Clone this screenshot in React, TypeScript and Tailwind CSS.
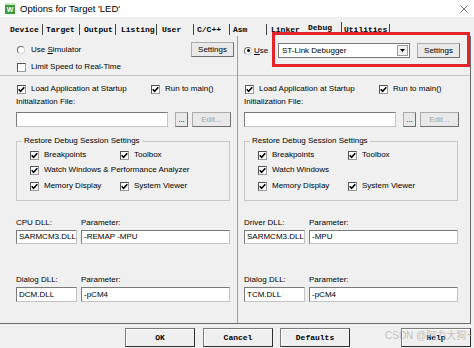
import React from 'react';

type Kids = { children?: React.ReactNode; className?: string };

const Check = ({ on = true }: { on?: boolean }) => (
  <span className="w-[9px] h-[9px] shrink-0 flex items-center justify-center bg-white border border-[#9a9a9a] border-t-[#555] border-l-[#555]">
    {on && (
      <svg width="7" height="7" viewBox="0 0 7 7">
        <path d="M0.7 3.3 2.6 5.3 6.3 1.2" fill="none" stroke="#000" strokeWidth="1.6" />
      </svg>
    )}
  </span>
);

const Radio = ({ on = false }: { on?: boolean }) => (
  <span className="w-[8px] h-[8px] shrink-0 rounded-full flex items-center justify-center bg-white border border-[#d4d4d4] border-t-[#6a6a6a] border-l-[#6a6a6a]">
    {on && <span className="w-[3px] h-[3px] rounded-full bg-black" />}
  </span>
);

const Opt = ({ label, on = true, className = '' }: { label: React.ReactNode; on?: boolean; className?: string }) => (
  <div className={`h-[10px] flex items-center gap-[5px] ${className}`}>
    <Check on={on} />
    <span className="whitespace-nowrap">{label}</span>
  </div>
);

const Btn = ({ children, className = '' }: Kids) => (
  <div className={`h-[15px] shrink-0 flex items-center justify-center bg-[#e9e9e9] border border-[#acacac] border-r-[#707070] border-b-[#707070] ${className}`}>
    {children}
  </div>
);

const Field = ({ children, className = '' }: Kids) => (
  <div className={`shrink-0 flex items-center pl-[2px] overflow-hidden bg-white border border-[#c4c4c4] border-t-[#7a7a7a] border-l-[#7a7a7a] whitespace-nowrap ${className}`}>
    {children}
  </div>
);

const BigBtn = ({ children, className = '' }: Kids) => (
  <div className={`h-[19px] w-[70px] shrink-0 flex items-center justify-center bg-[#efefef] border border-[#7b7b7b] border-r-[#2e2e2e] border-b-[#2e2e2e] shadow-[inset_1px_1px_0_#fff] font-['Liberation_Mono',monospace] font-bold text-[8px] ${className}`}>
    {children}
  </div>
);

type LowerProps = {
  watch: string;
  dllLabel: string;
  dll1: string;
  param1: string;
  dll2: string;
  param2: string;
};

const Lower = ({ watch, dllLabel, dll1, param1, dll2, param2 }: LowerProps) => (
  <div className="flex flex-col">
    <div className="mt-[8px] flex items-center">
      <Opt label="Load Application at Startup" className="w-[134px] ml-[1px]" />
      <Opt label="Run to main()" />
    </div>
    <div className="mt-[3px] h-[10px] leading-[10px]">Initialization File:</div>
    <div className="mt-[5px] flex items-center">
      <Field className="w-[152px] h-[15px]" />
      <Btn className="w-[13px] ml-[7px] leading-none">...</Btn>
      <Btn className="w-[39px] ml-[4px] text-[#a3a3a3]">Edit...</Btn>
    </div>
    <fieldset className="mt-[9px] h-[65px] w-[214px] border border-[#c8c8c8]">
      <legend className="ml-[5px] px-[2px] leading-[10px]">Restore Debug Session Settings</legend>
      <div className="pl-[13px] pt-[4px] flex flex-col gap-[5px]">
        <div className="flex">
          <Opt label="Breakpoints" className="w-[90px]" />
          <Opt label="Toolbox" />
        </div>
        <Opt label={watch} />
        <div className="flex mt-[1px]">
          <Opt label="Memory Display" className="w-[90px]" />
          <Opt label="System Viewer" />
        </div>
      </div>
    </fieldset>
    <div className="mt-[17px] h-[10px] leading-[10px] flex">
      <span className="w-[65px]">{dllLabel}</span>
      <span>Parameter:</span>
    </div>
    <div className="mt-[2px] flex gap-[4px]">
      <Field className="w-[61px] h-[14px]">{dll1}</Field>
      <Field className="w-[149px] h-[14px]">{param1}</Field>
    </div>
    <div className="mt-[31px] h-[10px] leading-[10px] flex">
      <span className="w-[65px]">Dialog DLL:</span>
      <span>Parameter:</span>
    </div>
    <div className="mt-[2px] flex gap-[4px]">
      <Field className="w-[61px] h-[15px]">{dll2}</Field>
      <Field className="w-[149px] h-[15px]">{param2}</Field>
    </div>
  </div>
);

const tabs = [
  { label: 'Device', cls: 'w-[43px] pl-[10px] border-r' },
  { label: 'Target', cls: 'w-[37px] pl-[3px] border-r' },
  { label: 'Output', cls: 'w-[36px] pl-[4px] border-r' },
  { label: 'Listing', cls: 'w-[41px] pl-[5px] border-r' },
  { label: 'User', cls: 'w-[37px] pl-[5px] border-r' },
  { label: 'C/C++', cls: 'w-[36px] pl-[3px] border-r' },
  { label: 'Asm', cls: 'w-[37px] pl-[3px] border-r' },
  { label: 'Linker', cls: 'w-[39px] pl-[4px]' },
  { label: 'Debug', cls: 'w-[36px] pl-[2px] border-r mb-[2px]' },
  { label: 'Utilities', cls: 'w-[48px] pl-[2px] border-r' },
];

const App: React.FC = () => {
  return (
    <div className="relative w-[474px] h-[348px] overflow-hidden bg-[#f0f0f0] text-black text-[8px] font-['Liberation_Sans',Arial,sans-serif] flex flex-col">
      {/* Title bar */}
      <div className="h-[17px] shrink-0 bg-white flex items-center">
        <div className="ml-[5px] w-[10px] h-[11px] bg-[#3c9a3c] border-t-2 border-[#cfe8c0] flex items-center justify-center text-white font-bold text-[7px] leading-none">
          W
        </div>
        <span className="ml-[5px] text-[9.5px] leading-none">Options for Target 'LED'</span>
        <svg className="ml-auto mr-[6px]" width="8" height="8" viewBox="0 0 8 8">
          <path d="M0.5 0.5 7.5 7.5 M7.5 0.5 0.5 7.5" stroke="#666" strokeWidth="0.9" />
        </svg>
      </div>

      {/* Tab strip */}
      <div className="h-[19px] shrink-0 flex items-end pb-[1px] font-['Liberation_Mono',monospace] font-bold text-[8px]">
        {tabs.map((t) => (
          <div key={t.label} className={`h-[11px] flex items-center border-[#444] leading-none ${t.cls}`}>
            {t.label}
          </div>
        ))}
      </div>

      {/* Tab page */}
      <div className="h-[288px] w-[471px] shrink-0 flex border-r border-b border-[#6a6a6a]">
        {/* left half */}
        <div className="w-[238px] border-r border-[#a0a0a0] flex flex-col">
          <div className="h-[40px] border-b border-[#c8c8c8] pl-[17px] pr-[3px] pt-[6px] flex flex-col">
            <div className="h-[15px] flex items-center">
              <Radio />
              <span className="ml-[6px]">
                Use <span className="underline">S</span>imulator
              </span>
              <Btn className="w-[43px] ml-auto">Settings</Btn>
            </div>
            <Opt label="Limit Speed to Real-Time" on={false} className="mt-[5px]" />
          </div>
          <div className="pl-[16px]">
            <Lower
              watch="Watch Windows & Performance Analyzer"
              dllLabel="CPU DLL:"
              dll1="SARMCM3.DLL"
              param1="-REMAP -MPU"
              dll2="DCM.DLL"
              param2="-pCM4"
            />
          </div>
        </div>

        {/* right half */}
        <div className="flex-1 flex flex-col">
          <div className="h-[40px] border-b border-[#c8c8c8] pl-[6px] pt-[7px]">
            <div className="h-[15px] flex items-center">
              <div className="w-[34px] flex items-center gap-[2px]">
                <Radio on />
                <span>
                  <span className="underline">U</span>se
                </span>
              </div>
              <div className="w-[132px] h-[15px] bg-white border border-[#7a7a7a] flex items-center pl-[3px] pr-[1px]">
                <span className="flex-1 whitespace-nowrap">ST-Link Debugger</span>
                <span className="w-[11px] h-[11px] bg-[#f0f0f0] border border-[#9a9a9a] flex items-center justify-center">
                  <svg width="5" height="3" viewBox="0 0 5 3">
                    <path d="M0 0h5L2.5 3z" fill="#000" />
                  </svg>
                </span>
              </div>
              <Btn className="w-[43px] ml-[7px]">Settings</Btn>
            </div>
          </div>
          <div className="pl-[6px]">
            <Lower
              watch="Watch Windows"
              dllLabel="Driver DLL:"
              dll1="SARMCM3.DLL"
              param1="-MPU"
              dll2="TCM.DLL"
              param2="-pCM4"
            />
          </div>
        </div>
      </div>

      {/* Footer buttons */}
      <div className="flex-1 flex items-start pt-[4px]">
        <BigBtn className="ml-[125px]">OK</BigBtn>
        <BigBtn className="ml-[8px]">Cancel</BigBtn>
        <BigBtn className="ml-[7px]">Defaults</BigBtn>
        <BigBtn className="ml-[51px] w-[69px]">Help</BigBtn>
      </div>

      {/* Annotation box */}
      <div className="absolute left-[272px] top-[32px] w-[198px] h-[35px] border-[3px] border-[#e3242b]" />

      {/* Watermark */}
      <div className="absolute left-[385px] top-[331px] text-[10px] leading-none text-[#b4b4b4]/80 whitespace-nowrap font-['Liberation_Sans','Noto_Sans_CJK_SC',sans-serif]">
        CSDN @阿力大狗~
      </div>
    </div>
  );
};

export default App;
